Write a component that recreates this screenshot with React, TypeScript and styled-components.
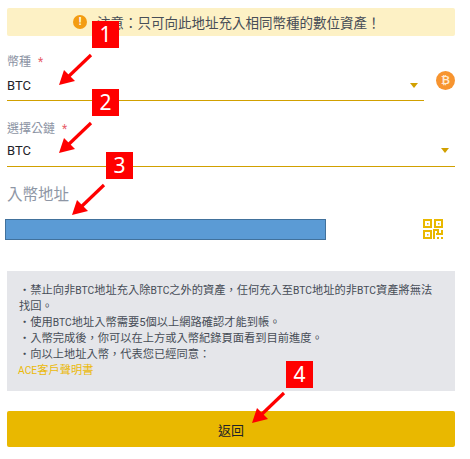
import React from "react";
import styled, { createGlobalStyle } from "styled-components";

const Global = createGlobalStyle`
  html, body { margin: 0; padding: 0; background: #fff; }
  body { font-family: Roboto, "Noto Sans CJK TC", sans-serif; color: #1e2329; }
  * { box-sizing: border-box; }
`;

const Page = styled.div`
  position: relative;
  width: 470px;
  height: 459px;
  overflow: hidden;
  padding: 8px 15px 0 7px;
`;

const Alert = styled.div`
  height: 28px;
  background: #fdf1c5;
  border-radius: 2px;
  display: flex;
  align-items: center;
  justify-content: center;
  gap: 10px;
  font-size: 13.5px;
  color: #474d57;
  padding-right: 8.5px;
`;

const AlertIcon = styled.span`
  width: 14px;
  height: 14px;
  border-radius: 50%;
  background: #f39c12;
  color: #fff;
  font-size: 10px;
  font-weight: 700;
  line-height: 14px;
  text-align: center;
  flex: none;
`;

const Field = styled.div<{ $top: number }>`
  margin-top: ${(p) => p.$top}px;
`;

const FieldRow = styled.div`
  display: flex;
  align-items: flex-start;
  justify-content: space-between;
`;

const CoinIcon = styled.span`
  width: 19px;
  height: 19px;
  margin-top: 17px;
  border-radius: 50%;
  background: #f7942f;
  color: #ffe9d0;
  font-size: 11px;
  font-weight: 700;
  line-height: 19px;
  text-align: center;
  flex: none;
`;

const Label = styled.label`
  display: block;
  font-size: 12px;
  line-height: 16px;
  color: #8b93a3;
`;

const Star = styled.span`
  color: #e8606a;
  margin-left: 7px;
`;

const Select = styled.div<{ $width: number; $gap: number; $height: number }>`
  width: ${(p) => p.$width}px;
  margin-top: ${(p) => p.$gap}px;
  height: ${(p) => p.$height}px;
  border-bottom: 1px solid #d1a000;
  display: flex;
  align-items: flex-start;
  justify-content: space-between;
  padding: 5px 6px 0 0;
  font-size: 13px;
  line-height: 16px;
  color: #1e2329;
`;

const Caret = styled.span`
  width: 0;
  height: 0;
  margin-top: 5px;
  border-left: 4.5px solid transparent;
  border-right: 4.5px solid transparent;
  border-top: 5px solid #d1a000;
`;

const AddressLabel = styled.div`
  margin-top: 16px;
  font-size: 15.5px;
  line-height: 24px;
  color: #8e96a5;
`;

const AddressRow = styled.div`
  margin-top: 12px;
  display: flex;
  align-items: flex-start;
`;

const Redacted = styled.div`
  width: 321px;
  height: 21px;
  margin-left: -2px;
  background: #5b9bd5;
  border: 1px solid #41719c;
  flex: none;
`;

const QrWrap = styled.div`
  margin-left: 97px;
  width: 20px;
  height: 20px;
`;

const Notice = styled.div`
  margin-top: 31px;
  height: 120px;
  background: #e5e6ea;
  padding: 12px 16px 0 12px;
  font-size: 11.25px;
  line-height: 16px;
  color: #474d57;
`;

const Latin = styled.span`
  font-size: 10.25px;
`;

const NoticeLink = styled.a`
  display: block;
  color: #ebb90b;
  margin-left: -1px;
`;

const BackButton = styled.button`
  display: block;
  width: 100%;
  height: 36px;
  margin-top: 20px;
  border: none;
  border-radius: 2px;
  background: #e9b800;
  color: #1e2329;
  font-family: inherit;
  font-size: 13px;
  padding: 0;
`;

const Badge = styled.div<{ $x: number; $y: number }>`
  position: absolute;
  left: ${(p) => p.$x}px;
  top: ${(p) => p.$y}px;
  width: 27px;
  height: 27px;
  background: #ff0000;
  color: #fff;
  font-family: "Noto Sans", sans-serif;
  font-size: 21px;
  line-height: 27px;
  text-align: center;
`;

const ArrowSvg = styled.svg<{ $x: number; $y: number }>`
  position: absolute;
  left: ${(p) => p.$x}px;
  top: ${(p) => p.$y}px;
`;

const Arrow = ({ x, y }: { x: number; y: number }) => (
  <ArrowSvg $x={x} $y={y} width="34" height="33" viewBox="0 0 34 33">
    <path d="M32 2 L9 24" stroke="#f00" strokeWidth="3.2" strokeLinecap="butt" />
    <path d="M0 32 L5 17 L16 28 Z" fill="#f00" />
  </ArrowSvg>
);

const Qr = () => (
  <svg width="20" height="20" viewBox="0 0 20 20">
    <g fill="none" stroke="#e9b800" strokeWidth="2">
      <rect x="1" y="1" width="7" height="7" />
      <rect x="12" y="1" width="7" height="7" />
      <rect x="1" y="12" width="7" height="7" />
      <path d="M11 20 V11 H15 V15 M19 11 V15 H13" />
    </g>
    <g fill="#e9b800">
      <rect x="4" y="4" width="1.5" height="1.5" />
      <rect x="15" y="4" width="1.5" height="1.5" />
      <rect x="4" y="15" width="1.5" height="1.5" />
      <rect x="14" y="18" width="2" height="2" />
      <rect x="18" y="18" width="2" height="2" />
    </g>
  </svg>
);

export default function App() {
  return (
    <Page>
      <Global />
      <Alert>
        <AlertIcon>!</AlertIcon>
        <span>注意：只可向此地址充入相同幣種的數位資產！</span>
      </Alert>
      <Field $top={18}>
        <FieldRow>
          <div>
            <Label>幣種<Star>*</Star></Label>
            <Select $width={417} $gap={3} $height={28}>
              BTC
              <Caret />
            </Select>
          </div>
          <CoinIcon>₿</CoinIcon>
        </FieldRow>
      </Field>
      <Field $top={20}>
        <Label>選擇公鏈<Star>*</Star></Label>
        <Select $width={448} $gap={1} $height={29}>
          BTC
          <Caret />
        </Select>
      </Field>
      <AddressLabel>入幣地址</AddressLabel>
      <AddressRow>
        <Redacted />
        <QrWrap><Qr /></QrWrap>
      </AddressRow>
      <Notice>
        ・禁止向非<Latin>BTC</Latin>地址充入除<Latin>BTC</Latin>之外的資產，任何充入至<Latin>BTC</Latin>地址的非<Latin>BTC</Latin>資產將無法找回。<br />
        ・使用<Latin>BTC</Latin>地址入幣需要5個以上網路確認才能到帳。<br />
        ・入幣完成後，你可以在上方或入幣紀錄頁面看到目前進度。<br />
        ・向以上地址入幣，代表您已經同意：<br />
        <NoticeLink><Latin>ACE</Latin>客戶聲明書</NoticeLink>
      </Notice>
      <BackButton>返回</BackButton>
      <Badge $x={92} $y={21}>1</Badge>
      <Arrow x={59} y={53} />
      <Badge $x={92} $y={89}>2</Badge>
      <Arrow x={59} y={121} />
      <Badge $x={106} $y={152}>3</Badge>
      <Arrow x={72} y={183} />
      <Badge $x={286} $y={361}>4</Badge>
      <Arrow x={252} y={391} />
    </Page>
  );
}
